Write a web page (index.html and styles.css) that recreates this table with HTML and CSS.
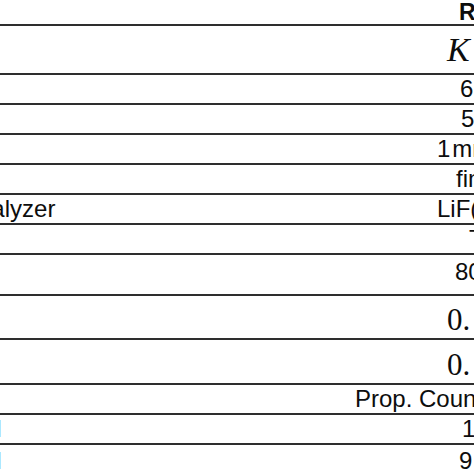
FILE: index.html
```html
<!DOCTYPE html>
<html>
<head>
<meta charset="utf-8">
<link rel="stylesheet" href="styles.css">
</head>
<body>
<div class="table">
  <div class="row h-head"><span class="label"></span><span class="val head v-r">Results</span></div>
  <div class="row h-k"><span class="label"></span><span class="val math v-k"><i>K</i></span></div>
  <div class="row h-std"><span class="label"></span><span class="val v-6">6</span></div>
  <div class="row h-std"><span class="label"></span><span class="val v-5">5</span></div>
  <div class="row h-std"><span class="label"></span><span class="val v-1mm">1&#8202;mm</span></div>
  <div class="row h-std"><span class="label"></span><span class="val v-fir">fine</span></div>
  <div class="row h-std"><span class="label l-an">Analyzer</span><span class="val v-lif">LiF(200)</span></div>
  <div class="row h-std"><span class="label"></span><span class="val v-t">T</span></div>
  <div class="row h-80"><span class="label"></span><span class="val v-80">800</span></div>
  <div class="row h-z1"><span class="label"></span><span class="val math v-0">0.</span></div>
  <div class="row h-z2"><span class="label"></span><span class="val math v-0">0.</span></div>
  <div class="row h-std"><span class="label"></span><span class="val v-prop">Prop. Counter</span></div>
  <div class="row h-std"><span class="label l-l">Total</span><span class="val v-1">1</span></div>
  <div class="row h-last"><span class="label l-l">Total</span><span class="val v-9">9</span></div>
</div>
</body>
</html>
```
FILE: styles.css
```css
html, body {
  margin: 0;
  padding: 0;
  background: #ffffff;
  overflow: hidden;
}
body {
  width: 474px;
  height: 474px;
  font-family: "Liberation Sans", Arial, sans-serif;
  font-size: 24px;
  color: #0d0d0d;
}
.table {
  display: flex;
  flex-direction: column;
  width: 474px;
}
.row {
  display: grid;
  grid-template-columns: 474px;
  align-items: center;
  border-bottom: 2px solid #2e2e2e;
  white-space: nowrap;
  overflow: hidden;
  box-sizing: border-box;
}
.label, .val {
  grid-area: 1 / 1;
  line-height: 1;
}
.h-head { height: 26px; }
.h-k { height: 49px; }
.h-std { height: 30px; }
.h-80 { height: 41px; }
.h-z1 { height: 44px; }
.h-z2 { height: 45px; }
.h-last { height: 31px; border-bottom: none; }

.l-an { margin-left: -38px; }
.l-l { margin-left: -49px; }
.head {
  font-weight: bold;
  font-size: 23px;
}
.math {
  font-family: "Liberation Serif", "Times New Roman", serif;
}
.v-k { font-size: 34px; margin-left: 447px; }
.v-0 { font-size: 31px; margin-left: 447px; padding-top: 5px; }
.v-r { margin-left: 459px; }
.v-6 { margin-left: 460px; }
.v-5 { margin-left: 461px; }
.v-1mm { margin-left: 437px; }
.v-fir { margin-left: 456px; }
.v-lif { margin-left: 437px; }
.v-t { margin-left: 469px; }
.v-80 { margin-left: 455px; padding-bottom: 6px; }
.v-prop { margin-left: 355px; }
.v-1 { margin-left: 462px; }
.v-9 { margin-left: 459px; }
```
